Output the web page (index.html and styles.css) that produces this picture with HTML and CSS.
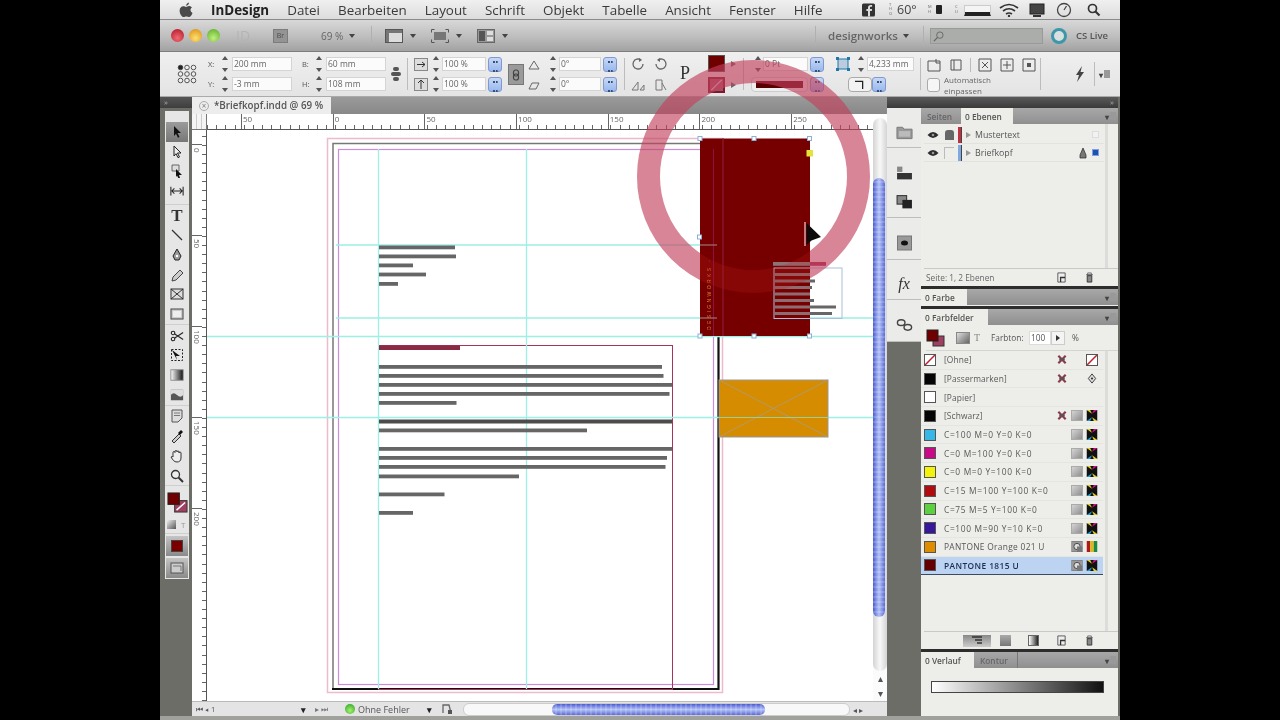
FILE: index.html
```html
<!DOCTYPE html>
<html lang="de">
<head>
<meta charset="utf-8">
<title>InDesign</title>
<link rel="stylesheet" href="styles.css">
</head>
<body>
<svg class="defs" aria-hidden="true">
  <symbol id="cross" viewBox="0 0 12 12"><path d="M2 2l8 8M10 2l-8 8" stroke="#8a3a4a" stroke-width="2.4"/><path d="M3 6h6" stroke="#555" stroke-width="2"/></symbol>
  <symbol id="cmyk" viewBox="0 0 12 12"><rect width="12" height="12" fill="#111"/><path d="M0 0l4 0 2 4z" fill="#e0d020"/><path d="M12 0l-4 0-2 4z" fill="#d01080"/><path d="M0 12l4 0 2-4z" fill="#20a0d0"/><path d="M12 12l-4 0-2-4z" fill="#e0d020"/></symbol>
  <symbol id="spot" viewBox="0 0 12 12"><rect width="12" height="12" fill="#999" stroke="#666"/><circle cx="6" cy="6" r="3.4" fill="#ddd" stroke="#444"/><path d="M6 6h6v6H6z" fill="#777"/></symbol>
  <symbol id="lab" viewBox="0 0 12 12"><rect width="4" height="12" fill="#b01818"/><rect x="4" width="4" height="12" fill="#d8b820"/><rect x="8" width="4" height="12" fill="#1c8a40"/></symbol>
  <symbol id="newdoc" viewBox="0 0 12 12"><path d="M2 1h8v10H2z" fill="#eee" stroke="#555"/><path d="M5 11V6h5" fill="none" stroke="#333" stroke-width="1.4"/></symbol>
  <symbol id="trash" viewBox="0 0 12 12"><path d="M2.5 3h7M3.5 4h5v7h-5z" fill="#888" stroke="#333"/><path d="M4 1h4v2H4z" fill="#ddd" stroke="#444" stroke-width=".7"/></symbol>
  <symbol id="eye" viewBox="0 0 12 10"><path d="M.5 5q5.500-6 11 0q-5.500 6-11 0z" fill="#2c2c2c"/><circle cx="6" cy="5" r="1.300" fill="#999"/></symbol>
</svg>

<div class="app">
  <header class="menubar">
    <svg class="apple" viewBox="0 0 14 16"><path d="M10 4c1.300 0 2.300.6 3 1.600-2.200 1.400-1.800 4.400.5 5.300-.7 1.900-2 4.100-3.500 4.100-.9 0-1.500-.6-2.600-.6s-1.800.6-2.700.6C2.700 15 .6 11.500.6 8.700.6 5.900 2.400 4.200 4.300 4.200c1.100 0 2 .7 2.800.7.700 0 1.700-.9 2.900-.9zM7.100 3.800C7 2.200 8.400.6 10 .4c.2 1.700-1.400 3.400-2.900 3.400z" fill="#4a4a4a"/></svg>
    <nav class="menus">
      <span class="menu strong">InDesign</span><span class="menu">Datei</span><span class="menu">Bearbeiten</span><span class="menu">Layout</span><span class="menu">Schrift</span><span class="menu">Objekt</span><span class="menu">Tabelle</span><span class="menu">Ansicht</span><span class="menu">Fenster</span><span class="menu">Hilfe</span>
    </nav>
    <div class="status-icons">
      <svg class="st st-fb" viewBox="0 0 13 13"><rect width="13" height="13" rx="1.500" fill="#333"/><path d="M8 13V7.500h1.800l.3-2H8V4.200c0-.6.2-1 1-1h1.100V1.400H8.700C7 1.400 6 2.400 6 4v1.500H4.400v2H6V13z" fill="#ddd"/></svg>
      <span class="mini-stack">T<br>H<br>O</span><span class="temp">60°</span>
      <span class="mini-stack wide">M<br>H</span><span class="bat-a"></span>
      <span class="mini-stack wide cu">C<br>U</span>
      <span class="slot"></span>
      <svg class="st st-wifi" viewBox="0 0 20 14"><path d="M1 5q9-7 18 0M4 8q6-4.500 12 0M7 11q3-2 6 0" fill="none" stroke="#333" stroke-width="1.700"/><circle cx="10" cy="13" r="1.200" fill="#333"/></svg>
      <svg class="st st-disp" viewBox="0 0 16 14"><rect x="1" y="1" width="14" height="10" fill="#444" stroke="#222"/><path d="M4 13h8" stroke="#333" stroke-width="2"/></svg>
      <svg class="st st-clock" viewBox="0 0 16 16"><circle cx="8" cy="8" r="6.500" fill="none" stroke="#444" stroke-width="1.300"/><path d="M8 8l2.500-4" stroke="#444" stroke-width="1.300"/></svg>
      <svg class="st st-search" viewBox="0 0 14 14"><circle cx="5.500" cy="5.500" r="4" fill="none" stroke="#333" stroke-width="1.700"/><path d="M8.500 8.500l4 4" stroke="#333" stroke-width="2.200"/></svg>
    </div>
  </header>

  <div class="appbar">
    <div class="lights"><i class="light red"></i><i class="light amber"></i><i class="light green"></i></div>
    <span class="id-ghost">ID</span>
    <span class="br">Br</span>
    <span class="zoom-val">69 %<b class="caret"></b></span>
    <i class="vsep"></i>
    <svg class="barico first" viewBox="0 0 18 14"><rect x=".5" y=".5" width="17" height="13" fill="#ddd" stroke="#555"/><rect x="1" y="1" width="16" height="3" fill="#777"/><rect x="1" y="4" width="3" height="9" fill="#777"/></svg><b class="caret"></b>
    <svg class="barico" viewBox="0 0 18 14"><rect x="3" y="3" width="12" height="8" fill="#777"/><path d="M.5 3.500v-3h3M14.500.5h3v3M.5 10.500v3h3M14.500 13.500h3v-3" fill="none" stroke="#555"/></svg><b class="caret"></b>
    <svg class="barico" viewBox="0 0 18 14"><rect x=".5" y=".5" width="17" height="13" fill="#999" stroke="#666"/><rect x="2" y="2" width="6" height="10" fill="#555"/><rect x="10" y="2" width="6" height="4" fill="#ddd"/><rect x="10" y="8" width="6" height="4" fill="#ddd"/></svg><b class="caret"></b>
    <span class="spacer"></span>
    <i class="vsep"></i>
    <span class="workspace">designworks<b class="caret"></b></span>
    <i class="vsep"></i>
    <span class="searchbox"><svg viewBox="0 0 12 12"><circle cx="7.500" cy="4.500" r="3.500" fill="none" stroke="#666"/><path d="M5 7l-4 4" stroke="#666" stroke-width="1.400"/></svg></span>
    <i class="cs-ring"></i>
    <span class="cslive">CS Live</span>
  </div>

  <div class="control">
    <svg class="refpoint" viewBox="0 0 20 20"><g fill="#eee" stroke="#444" stroke-width=".9"><circle cx="3.500" cy="3.500" r="2.300" fill="#222"/><circle cx="10" cy="3.500" r="2.300"/><circle cx="16.500" cy="3.500" r="2.300"/><circle cx="3.500" cy="10" r="2.300"/><circle cx="10" cy="10" r="2.300"/><circle cx="16.500" cy="10" r="2.300"/><circle cx="3.500" cy="16.500" r="2.300"/><circle cx="10" cy="16.500" r="2.300"/><circle cx="16.500" cy="16.500" r="2.300"/></g></svg>
    <div class="cgroup g-xy">
      <div class="crow"><span class="lbl">X:</span><i class="spin"></i><span class="field f-60">200 mm</span></div>
      <div class="crow"><span class="lbl">Y:</span><i class="spin"></i><span class="field f-60">-3 mm</span></div>
    </div>
    <div class="cgroup g-bh">
      <div class="crow"><span class="lbl">B:</span><i class="spin"></i><span class="field f-60">60 mm</span></div>
      <div class="crow"><span class="lbl">H:</span><i class="spin"></i><span class="field f-60">108 mm</span></div>
    </div>
    <svg class="chain" viewBox="0 0 12 16"><g fill="#555"><rect x="3" y="1" width="6" height="4" rx="2"/><rect x="1" y="6" width="10" height="4" rx="2"/><rect x="3" y="11" width="6" height="4" rx="2"/></g></svg>
    <i class="csep s1"></i>
    <div class="cgroup g-scale">
      <div class="crow"><svg class="tinyico" viewBox="0 0 14 13"><rect x=".5" y=".5" width="13" height="12" fill="#ddd" stroke="#888"/><path d="M3 6.500h8M11 6.500L8 4M11 6.500L8 9" stroke="#333" fill="none"/></svg><i class="spin"></i><span class="field f-44">100 %</span><i class="select"></i></div>
      <div class="crow"><svg class="tinyico" viewBox="0 0 14 13"><rect x=".5" y=".5" width="13" height="12" fill="#ddd" stroke="#888"/><path d="M7 2v9M7 2L4 5M7 2l3 3" stroke="#333" fill="none"/></svg><i class="spin"></i><span class="field f-44">100 %</span><i class="select"></i></div>
    </div>
    <span class="linkbtn"><svg viewBox="0 0 8 12"><rect x="1.500" y="1" width="5" height="6" rx="2.200" fill="none" stroke="#444" stroke-width="1.200"/><rect x="1.500" y="5" width="5" height="6" rx="2.200" fill="none" stroke="#444" stroke-width="1.200"/></svg></span>
    <div class="cgroup g-angle">
      <div class="crow"><svg class="tinyico" viewBox="0 0 14 13"><path d="M2 11h10L7 3z" fill="none" stroke="#666"/></svg><i class="spin"></i><span class="field f-42">0°</span><i class="select"></i></div>
      <div class="crow"><svg class="tinyico" viewBox="0 0 14 13"><path d="M2 11l3-6h7l-3 6z" fill="none" stroke="#666"/></svg><i class="spin"></i><span class="field f-42">0°</span><i class="select"></i></div>
    </div>
    <i class="csep s2"></i>
    <div class="rotgrid">
      <svg viewBox="0 0 16 16"><path d="M13 8a5 5 0 1 1-2-4" fill="none" stroke="#666" stroke-width="1.300"/><path d="M9 2l3 2-3 2" fill="#666"/></svg>
      <svg viewBox="0 0 16 16"><path d="M3 8a5 5 0 1 0 2-4" fill="none" stroke="#666" stroke-width="1.300"/><path d="M7 2L4 4l3 2" fill="#666"/></svg>
      <svg viewBox="0 0 16 16"><path d="M2 13h6V5l-6 8zM14 13V8l-4 5z" fill="none" stroke="#777"/></svg>
      <svg viewBox="0 0 16 16"><path d="M3 3h6v10H3zM9 6l4 7" fill="none" stroke="#777"/></svg>
    </div>
    <span class="pbox">P</span>
    <div class="fillstack">
      <div class="crow"><i class="fillchip"></i><i class="miniarrow"></i></div>
      <div class="crow"><span class="strokechip"><svg viewBox="0 0 14 14"><path d="M1 13L13 1" stroke="#e0e0e0" stroke-width="1.300"/></svg></span><i class="miniarrow"></i></div>
    </div>
    <i class="csep s3"></i>
    <div class="cgroup g-stroke">
      <div class="crow"><i class="spin"></i><span class="field f-stroke">0 Pt</span><i class="select"></i></div>
      <div class="crow"><span class="strokeline"><i></i></span><i class="select"></i></div>
    </div>
    <div class="cgroup g-corner">
      <div class="crow"><svg class="tinyico blueico" viewBox="0 0 14 14"><path d="M2 2h10v10H2z" fill="#bcd" stroke="#27a"/><path d="M0 0h3v3H0zM11 0h3v3h-3zM0 11h3v3H0zM11 11h3v3h-3z" fill="#27a"/></svg><i class="spin"></i><span class="field f-corner">4,233 mm</span></div>
      <div class="crow corner-row"><span class="cornersel"><svg viewBox="0 0 12 10"><path d="M1 1.500h8.500V10" fill="none" stroke="#222" stroke-width="1.400"/></svg></span><i class="select"></i></div>
    </div>
    <i class="csep s5"></i>
    <div class="fitting">
      <div class="fit-icons">
        <svg viewBox="0 0 14 14"><path d="M1 3h12v10H1z" fill="none" stroke="#555"/><path d="M9 1v4h4" fill="none" stroke="#555"/></svg>
        <svg viewBox="0 0 14 14"><path d="M2 2h10v10H2z" fill="none" stroke="#555"/><path d="M5 2v10" stroke="#555"/></svg>
        <i class="fit-sep"></i>
        <svg viewBox="0 0 14 14"><path d="M1 1h12v12H1z" fill="none" stroke="#555"/><path d="M4 4l6 6M10 4l-6 6" stroke="#555"/></svg>
        <svg viewBox="0 0 14 14"><path d="M1 1h12v12H1z" fill="none" stroke="#555"/><path d="M7 3v8M3 7h8" stroke="#555"/></svg>
        <svg viewBox="0 0 14 14"><path d="M1 1h12v12H1z" fill="none" stroke="#555"/><rect x="5" y="5" width="4" height="4" fill="#555"/></svg>
      </div>
      <div class="autofit"><i class="checkbox"></i><span>Automatisch<br>einpassen</span></div>
    </div>
    <i class="csep s6"></i>
    <svg class="bolt" viewBox="0 0 10 16"><path d="M7 0L1 9h3l-2 7 7-10H5.500z" fill="#444"/></svg>
    <i class="csep s7"></i>
    <span class="panelmenu"><b>▾</b><i></i></span>
  </div>

  <div class="work">
    <aside class="toolcol">
      <div class="coltop"><span>»</span></div>
      <div class="tools">
        <div class="toolset first-set">
          <span class="tool active"><svg viewBox="0 0 14 14"><path d="M4 1l7 7H7.500l2 4-1.500.7-2-4L4 11z" fill="#111"/></svg></span>
          <span class="tool"><svg viewBox="0 0 14 14"><path d="M4 1l7 7H7.500l2 4-1.500.7-2-4L4 11z" fill="#eee" stroke="#222"/></svg></span>
          <span class="tool"><svg viewBox="0 0 14 14"><path d="M2 1h7v6H2z" fill="#ddd" stroke="#666"/><path d="M6 5l6 6H9l1 3-1.500.3L7 11.500 6 13z" fill="#111"/></svg></span>
          <span class="tool"><svg viewBox="0 0 16 14"><path d="M1 2v10M15 2v10M2 7h12M2 7l3-3M2 7l3 3M14 7l-3-3M14 7l-3 3" fill="none" stroke="#222" stroke-width="1.200"/></svg></span>
        </div>
        <div class="toolset">
          <span class="tool"><span class="t-glyph">T</span></span>
          <span class="tool"><svg viewBox="0 0 14 14"><path d="M2 2l10 10" stroke="#333" stroke-width="1.300"/></svg></span>
          <span class="tool"><svg viewBox="0 0 14 14"><path d="M7 1l4 7-2 4H5L3 8z" fill="#999" stroke="#222"/><circle cx="7" cy="8" r="1.200" fill="#fff"/></svg></span>
          <span class="tool"><svg viewBox="0 0 14 14"><path d="M2 13l1-4 7-7 3 3-7 7z" fill="#ccc" stroke="#444"/></svg></span>
          <span class="tool"><svg viewBox="0 0 14 14"><rect x="1" y="2" width="12" height="10" fill="#ddd" stroke="#333"/><path d="M1 2l12 10M13 2L1 12" stroke="#333"/></svg></span>
          <span class="tool"><svg viewBox="0 0 14 14"><rect x="1" y="2" width="12" height="10" fill="#ccc" stroke="#444"/><rect x="3" y="4" width="8" height="6" fill="#eee"/></svg></span>
        </div>
        <div class="toolset">
          <span class="tool"><svg viewBox="0 0 16 14"><circle cx="3.500" cy="3.500" r="2" fill="none" stroke="#222" stroke-width="1.200"/><circle cx="3.500" cy="10.500" r="2" fill="none" stroke="#222" stroke-width="1.200"/><path d="M5 4.500L15 11M5 9.500L15 3" stroke="#222" stroke-width="1.200"/></svg></span>
          <span class="tool"><svg viewBox="0 0 14 14"><rect x="1.500" y="1.500" width="11" height="11" fill="none" stroke="#222" stroke-dasharray="2 1.500"/><path d="M2 2l8 6H6l1 4z" fill="#111"/></svg></span>
          <span class="tool"><svg viewBox="0 0 16 14"><defs><linearGradient id="gt"><stop offset="0" stop-color="#fff"/><stop offset="1" stop-color="#111"/></linearGradient></defs><rect x="1" y="1" width="14" height="12" fill="url(#gt)" stroke="#888"/></svg></span>
          <span class="tool"><svg viewBox="0 0 16 14"><rect x="1" y="1" width="14" height="12" fill="#555"/><path d="M1 7q3-4 7 0t7 0V1H1z" fill="#ddd"/></svg></span>
        </div>
        <div class="toolset">
          <span class="tool"><svg viewBox="0 0 14 14"><path d="M2 1h10v8l-4 4H2z" fill="#ddd" stroke="#555"/><path d="M4 4h6M4 6.500h6" stroke="#777"/></svg></span>
          <span class="tool"><svg viewBox="0 0 14 14"><path d="M2 12l7-7 2 2-7 7z" fill="#ccc" stroke="#333"/><path d="M8 4l3-3 2 2-3 3z" fill="#111"/></svg></span>
          <span class="tool"><svg viewBox="0 0 14 14"><path d="M3 7V3.500a1 1 0 0 1 2 0V2.500a1 1 0 0 1 2 0v.5a1 1 0 0 1 2 0v1a1 1 0 0 1 2 0V9c0 3-2 4-4 4-3 0-4-2-6-5 1-1 2 0 2 0z" fill="#eee" stroke="#333"/></svg></span>
          <span class="tool"><svg viewBox="0 0 14 14"><circle cx="5.500" cy="5.500" r="4" fill="#eee" stroke="#333" stroke-width="1.300"/><path d="M8.500 8.500l4.500 4.500" stroke="#333" stroke-width="2"/></svg></span>
        </div>
        <div class="toolset colors">
          <svg class="fs" viewBox="0 0 22 22"><rect x="8" y="9" width="13" height="12" fill="#a04060" stroke="#333"/><path d="M10 19l9-8" stroke="#fff" stroke-width="1.500"/><rect x="1" y="1" width="12" height="12" fill="#6e0000" stroke="#222"/></svg>
          <div class="fs-mini"><i class="fm-a"></i><i class="fm-t">T</i></div>
        </div>
        <div class="toolset viewbtns">
          <span class="tool big"><i class="viewchip"></i></span>
          <span class="tool big"><svg viewBox="0 0 14 12"><rect x="1" y="1" width="12" height="10" fill="#ccc" stroke="#555"/><path d="M3 4h8v5" fill="none" stroke="#777"/></svg></span>
        </div>
      </div>
    </aside>

    <section class="doc">
      <div class="doctabs"><span class="doctab"><i class="close">×</i>*Briefkopf.indd @ 69 %</span></div>
      <div class="hruler"><span class="corner"></span><div class="hmarks"><span>50</span><span>0</span><span>50</span><span>100</span><span>150</span><span>200</span><span>250</span></div><i class="ruler-cap"></i></div>
      <div class="docmid">
        <div class="vruler"><span>0</span><span>50</span><span>100</span><span>150</span><span>200</span></div>
        <svg class="canvas" viewBox="207 130 666 571">
          <rect x="207" y="130" width="666" height="571" fill="#fff"/>
          <g fill="none">
            <rect x="327.500" y="138.500" width="395" height="554" stroke="#ecbccc" stroke-width="1.500"/>
            <path d="M333 689V143.500H718" stroke="#777" stroke-width="1.500"/>
            <path d="M718.500 143V689H332" stroke="#111" stroke-width="2.200"/>
            <rect x="338.500" y="149.500" width="375" height="535" stroke="#cc8cdc" stroke-width="1.200"/>
            <rect x="378.500" y="345.500" width="294" height="344" stroke="#a8325a"/>
          </g>
          <g stroke="#9cf0e4" stroke-width="1.300">
            <path d="M378.500 149V689M526.500 149V689"/>
            <path d="M336 245H717M336 318H873M207 336.500H873M207 417.500H873"/>
          </g>
          <g class="greek">
            <rect x="379" y="245.500" width="76" height="3.800"/><rect x="379" y="254.500" width="77" height="3.800"/><rect x="379" y="263.500" width="34" height="3.800"/><rect x="379" y="272.600" width="47" height="3.800"/><rect x="379" y="282" width="19" height="3.800"/>
            <rect class="greek-red" x="379" y="345.500" width="81" height="4.500"/>
            <rect x="379" y="365" width="283" height="3.800"/><rect x="379" y="374" width="284.500" height="3.800"/><rect x="379" y="383" width="293" height="3.800"/><rect x="379" y="392" width="290.500" height="3.800"/><rect x="379" y="401" width="77.500" height="3.800"/>
            <rect class="greek-dark" x="379" y="419.500" width="293" height="4"/><rect x="379" y="428.500" width="208" height="3.800"/>
            <rect x="379" y="447" width="293" height="3.800"/><rect x="379" y="456" width="288" height="3.800"/><rect x="379" y="465" width="286.500" height="3.800"/><rect x="379" y="474.500" width="140" height="3.800"/>
            <rect x="379" y="492.500" width="65.500" height="3.800"/><rect x="379" y="511" width="34" height="3.800"/>
          </g>
          <rect x="719" y="380" width="109" height="57" fill="#d68c00" stroke="#999"/>
          <path d="M719 380l109 57M828 380l-109 57" stroke="#b09a6a"/>
          <path d="M719 417.500H828" stroke="#9ccf90" stroke-width="1.200"/>
          <rect x="700" y="138.500" width="110" height="197.500" rx="2" fill="#760000"/>
          <path d="M713.500 149V336" stroke="#8e1048"/>
          <path d="M723 138V336" stroke="#8e2040"/>
          <path d="M700 245H717M700 318H717" stroke="#a08a88"/>
          <rect x="774" y="268" width="68" height="50.500" fill="none" stroke="#a8c0e0"/>
          <rect x="773" y="262" width="37" height="3.800" fill="#8d7276"/><rect x="810" y="262" width="16" height="3.800" fill="#a02a50"/>
          <g class="greek-on">
            <rect x="774" y="273" width="36" height="3"/><rect x="774" y="279.500" width="36" height="3"/><rect x="774" y="286" width="36" height="3"/><rect x="774" y="292.500" width="36" height="3"/><rect x="774" y="299" width="36" height="3"/><rect x="774" y="305.500" width="36" height="3"/><rect x="774" y="312" width="36" height="3"/>
          </g>
          <g fill="#666">
            <rect x="810" y="279.500" width="5" height="3"/><rect x="810" y="286" width="2" height="3"/><rect x="810" y="299" width="4" height="3"/><rect x="810" y="305.500" width="26" height="3"/><rect x="810" y="312" width="22" height="3"/>
          </g>
          <text class="spine" transform="translate(711 330) rotate(-90)">DESIGNWORKS ·</text>
          <g class="handles">
            <rect x="698" y="136.500" width="4" height="4"/><rect x="752" y="136.500" width="4" height="4"/><rect x="807.500" y="136.500" width="4" height="4"/><rect x="697.500" y="235" width="4" height="4"/><rect x="698" y="334" width="4" height="4"/><rect x="752" y="334" width="4" height="4"/><rect x="807.500" y="334" width="4" height="4"/>
          </g>
          <rect x="806.500" y="150" width="6.500" height="6.500" fill="#e6e23c"/>
        </svg>
        <div class="vscroll">
          <div class="v-track"><i class="v-thumb"></i></div>
          <i class="arr a1">▴</i><i class="arr">▾</i>
        </div>
      </div>
      <div class="docstatus">
        <span class="pg-nav">⏮ ◂ 1</span>
        <b class="sm-caret">▾</b>
        <span class="pg-nav2">▸ ⏭</span>
        <i class="okdot"></i><span class="oktext">Ohne Fehler</span>
        <b class="sm-caret c2">▾</b>
        <svg class="preflight" viewBox="0 0 12 12"><path d="M2 10V2h6l2 8" fill="none" stroke="#666" stroke-width="1.300"/><rect x="7" y="7" width="4" height="4" fill="#555"/></svg>
        <div class="hscroll"><i class="h-thumb"></i></div>
        <span class="harr">◂ ▸</span>
      </div>
    </section>

    <aside class="dock">
      <div class="coltop dark"></div>
      <div class="docksec s-a"><svg viewBox="0 0 18 16"><path d="M1 3h6l1.500 2H17v10H1z" fill="#999" stroke="#777"/><rect x="3" y="7" width="12" height="6" fill="#bbb"/></svg></div>
      <div class="docksec s-b"><svg viewBox="0 0 16 14"><rect x="1" y="1" width="5" height="5" fill="#888"/><rect x="1" y="7" width="14" height="6" fill="#333"/></svg><svg viewBox="0 0 16 14"><rect x="1" y="1" width="9" height="8" fill="#888" stroke="#333"/><rect x="6" y="5" width="9" height="8" fill="#222"/></svg></div>
      <div class="docksec s-c"><svg viewBox="0 0 16 16"><rect x="1" y="1" width="14" height="14" fill="#999" stroke="#777"/><ellipse cx="8" cy="8" rx="3.500" ry="2.500" fill="#111"/></svg></div>
      <div class="docksec s-d"><span class="fx">fx</span></div>
      <div class="docksec s-e"><svg viewBox="0 0 18 14"><ellipse cx="5.500" cy="4.500" rx="4" ry="3" fill="none" stroke="#444" stroke-width="1.500"/><ellipse cx="12.500" cy="9.500" rx="4" ry="3" fill="none" stroke="#444" stroke-width="1.500"/></svg></div>
    </aside>

    <aside class="panels">
      <div class="coltop dark right"><span>»</span></div>
      <section class="panel p-layers">
        <div class="ptabs"><span class="ptab off">Seiten</span><span class="ptab on">0 Ebenen</span><span class="pmenu"><b>▾</b><i></i></span></div>
        <div class="pbody layers">
          <div class="layer"><svg class="eye" viewBox="0 0 12 10"><use href="#eye"/></svg><i class="lock"></i><i class="lcolor lred"></i><b class="tri"></b><span class="lname">Mustertext</span><i class="lsq"></i></div>
          <div class="layer"><svg class="eye" viewBox="0 0 12 10"><use href="#eye"/></svg><i class="nolock"></i><i class="lcolor lblue"></i><b class="tri"></b><span class="lname">Briefkopf</span><svg class="pen" viewBox="0 0 8 12"><path d="M4 1l3 7v3H1V8z" fill="#777" stroke="#222" stroke-width=".7"/></svg><i class="lsq bl"></i></div>
        </div>
        <div class="pfoot"><span class="pagesinfo">Seite: 1, 2 Ebenen</span><svg viewBox="0 0 12 12"><use href="#newdoc"/></svg><svg viewBox="0 0 12 12"><use href="#trash"/></svg></div>
      </section>
      <section class="panel p-color">
        <div class="ptabs"><span class="ptab on">0 Farbe</span><span class="pmenu"><b>▾</b><i></i></span></div>
      </section>
      <section class="panel p-swatches">
        <div class="ptabs"><span class="ptab on">0 Farbfelder</span><span class="pmenu"><b>▾</b><i></i></span></div>
        <div class="tintbar">
          <svg class="fs2" viewBox="0 0 20 18"><rect x="7" y="7" width="11" height="10" fill="#a04060" stroke="#333"/><rect x="1" y="1" width="11" height="11" fill="#6e0000" stroke="#222"/></svg>
          <span class="fmtbox"></span><span class="ttxt">T</span><span class="tintlabel">Farbton:</span><span class="tintval">100</span><span class="tintarrow"><b></b></span><span class="pct">%</span>
        </div>
        <div class="swlist">
          <div class="sw"><span class="chip none"><svg viewBox="0 0 12 12"><path d="M0 12L12 0" stroke="#c0202c" stroke-width="1.800"/></svg></span><span class="swname tight">[Ohne]</span><svg class="mi" viewBox="0 0 12 12"><use href="#cross"/></svg><span class="mi blank"></span><span class="chip small none"><svg viewBox="0 0 12 12"><path d="M0 12L12 0" stroke="#c0202c" stroke-width="1.800"/></svg></span></div>
          <div class="sw"><span class="chip k"></span><span class="swname tight">[Passermarken]</span><svg class="mi" viewBox="0 0 12 12"><use href="#cross"/></svg><span class="mi blank"></span><svg class="mi" viewBox="0 0 12 12"><path d="M6 1l4 5-4 5-4-5z" fill="#ddd" stroke="#333"/><circle cx="6" cy="6" r="1.200" fill="#333"/></svg></div>
          <div class="sw"><span class="chip w"></span><span class="swname tight">[Papier]</span></div>
          <div class="sw"><span class="chip k"></span><span class="swname tight">[Schwarz]</span><svg class="mi" viewBox="0 0 12 12"><use href="#cross"/></svg><i class="mi gray"></i><svg class="mi" viewBox="0 0 12 12"><use href="#cmyk"/></svg></div>
          <div class="sw"><span class="chip cy"></span><span class="swname">C=100 M=0 Y=0 K=0</span><span class="mi blank"></span><i class="mi gray"></i><svg class="mi" viewBox="0 0 12 12"><use href="#cmyk"/></svg></div>
          <div class="sw"><span class="chip ma"></span><span class="swname">C=0 M=100 Y=0 K=0</span><span class="mi blank"></span><i class="mi gray"></i><svg class="mi" viewBox="0 0 12 12"><use href="#cmyk"/></svg></div>
          <div class="sw"><span class="chip ye"></span><span class="swname">C=0 M=0 Y=100 K=0</span><span class="mi blank"></span><i class="mi gray"></i><svg class="mi" viewBox="0 0 12 12"><use href="#cmyk"/></svg></div>
          <div class="sw"><span class="chip re"></span><span class="swname">C=15 M=100 Y=100 K=0</span><span class="mi blank"></span><i class="mi gray"></i><svg class="mi" viewBox="0 0 12 12"><use href="#cmyk"/></svg></div>
          <div class="sw"><span class="chip gr"></span><span class="swname">C=75 M=5 Y=100 K=0</span><span class="mi blank"></span><i class="mi gray"></i><svg class="mi" viewBox="0 0 12 12"><use href="#cmyk"/></svg></div>
          <div class="sw"><span class="chip in"></span><span class="swname">C=100 M=90 Y=10 K=0</span><span class="mi blank"></span><i class="mi gray"></i><svg class="mi" viewBox="0 0 12 12"><use href="#cmyk"/></svg></div>
          <div class="sw spot-row"><span class="chip or"></span><span class="swname">PANTONE Orange 021 U</span><span class="mi blank"></span><svg class="mi" viewBox="0 0 12 12"><use href="#spot"/></svg><svg class="mi" viewBox="0 0 12 12"><use href="#lab"/></svg></div>
          <div class="sw selected"><span class="chip da"></span><span class="swname">PANTONE 1815 U</span><span class="mi blank"></span><svg class="mi" viewBox="0 0 12 12"><use href="#spot"/></svg><svg class="mi" viewBox="0 0 12 12"><use href="#cmyk"/></svg></div>
        </div>
        <div class="pfoot swfoot">
          <span class="showbtn"><svg viewBox="0 0 12 10"><path d="M1 2h10M4 5h7M6 8h5" stroke="#333" stroke-width="1.400"/></svg></span>
          <i class="fb solid"></i><i class="fb grad"></i>
          <svg viewBox="0 0 12 12"><use href="#newdoc"/></svg><svg viewBox="0 0 12 12"><use href="#trash"/></svg>
        </div>
      </section>
      <section class="panel p-grad">
        <div class="ptabs"><span class="ptab on">0 Verlauf</span><span class="ptab off">Kontur</span><i class="tabdiv"></i><span class="pmenu"><b>▾</b><i></i></span></div>
        <div class="gradbody"><i class="gradbar"></i></div>
      </section>
    </aside>
  </div>
  <div class="footer"></div>

  <svg class="overlay" viewBox="160 0 960 720" aria-hidden="true">
    <defs>
      <clipPath id="inrect"><rect x="700" y="138" width="110" height="198"/></clipPath>
      <mask id="outrect" maskUnits="userSpaceOnUse" x="160" y="0" width="960" height="720"><rect x="160" y="0" width="960" height="720" fill="#fff"/><rect x="700" y="138" width="110" height="198" fill="#000"/></mask>
    </defs>
    <circle cx="753.500" cy="176.500" r="105" fill="none" stroke="#c0405c" stroke-opacity=".64" stroke-width="23" mask="url(#outrect)"/>
    <circle cx="753.500" cy="176.500" r="105" fill="none" stroke="#c41a1a" stroke-opacity=".22" stroke-width="23" clip-path="url(#inrect)"/>
    <path d="M805 222v24" stroke="#e0a0a8" stroke-width="1.500"/>
    <path d="M806.500 223v22l5-4.500 9.500-3.500z" fill="#0b0b0b"/>
  </svg>
</div>
</body>
</html>
```
FILE: styles.css
```css
* { box-sizing: border-box; }
html, body { margin: 0; height: 100%; background: #000; overflow: hidden; }
.defs { position: absolute; width: 0; height: 0; }
i, b { display: block; font-style: normal; }
svg { display: block; flex: none; }

.app {
  position: relative; width: 960px; height: 720px; margin-left: 160px;
  display: flex; flex-direction: column; overflow: hidden;
  background: #6d6d68; color: #444;
  font-family: "Open Sans", "Liberation Sans", sans-serif;
  filter: blur(.55px);
}
.overlay { position: absolute; left: 0; top: 0; width: 960px; height: 720px; pointer-events: none; }

/* menu bar */
.menubar { height: 20px; flex: none; display: flex; align-items: center; background: linear-gradient(#f0f0f0, #dcdcdc); border-bottom: 1px solid #8a8a8a; }
.apple { width: 14px; height: 16px; margin-left: 19px; }
.menus { display: flex; gap: 18px; margin-left: 18px; font-size: 13.400px; color: #3a3a3a; white-space: nowrap; }
.menu { display: block; }
.strong { font-weight: 700; color: #222; }
.status-icons { margin-left: auto; display: flex; align-items: center; }
.st { height: 14px; }
.st-fb { width: 13px; margin-right: 14px; }
.mini-stack { font-size: 4px; line-height: 4.300px; color: #666; width: 6px; }
.mini-stack.wide { margin-left: 7px; }
.mini-stack.cu { margin-left: 13px; }
.temp { font-size: 12.500px; color: #444; margin-left: 2px; width: 24px; }
.bat-a { width: 6px; height: 9px; margin-left: 2px; background: #222; border-radius: 1px; }
.slot { width: 27px; height: 11px; margin-left: 3px; margin-top: 2px; background: linear-gradient(#f4f4f4 70%, #222 70%); border: 1px solid #ccc; border-bottom: 2px solid #222; }
.st-wifi { width: 20px; margin-left: 8px; }
.st-disp { width: 16px; margin-left: 10px; }
.st-clock { width: 16px; height: 16px; margin-left: 11px; }
.st-search { width: 14px; margin: 0 19px 0 15px; }

/* app bar */
.appbar { height: 32px; flex: none; display: flex; align-items: center; background: linear-gradient(#d8d8d8, #bdbdbd 55%, #a2a2a2); border-bottom: 1px solid #7d7d7d; }
.lights { display: flex; gap: 5px; margin-left: 11px; }
.light { width: 13px; height: 13px; border-radius: 50%; }
.red { background: radial-gradient(circle at 50% 70%, #f06a72, #b01024); }
.amber { background: radial-gradient(circle at 50% 70%, #ffe070, #d88a10); }
.green { background: radial-gradient(circle at 50% 70%, #c0f080, #58a820); }
.id-ghost { font-size: 14px; color: #b4b4b4; margin-left: 16px; width: 22px; }
.br { width: 15px; height: 14px; margin-left: 15px; background: #949494; border: 1px solid #7c7c7c; font-size: 7px; line-height: 12px; text-align: center; color: #4c4c4c; }
.zoom-val { display: flex; align-items: center; width: 50px; margin-left: 33px; font-size: 10px; color: #666; gap: 6px; white-space: nowrap; }
.caret { width: 0; height: 0; border: 3px solid transparent; border-top: 4px solid #444; border-bottom: 0; flex: none; }
.vsep { width: 1px; height: 20px; background: #b0b0b0; flex: none; }
.barico { width: 18px; height: 14px; margin-left: 15px; margin-right: 7px; }
.barico.first { margin-left: 13px; }
.spacer { flex: 1; }
.workspace { display: flex; align-items: center; gap: 5px; margin: 0 14px 0 12px; font-size: 11.500px; font-weight: 600; color: #666; }
.searchbox { width: 113px; height: 16px; margin-left: 6px; background: #aaadaa; border: 1px solid #989a98; padding: 2px; }
.searchbox svg { width: 11px; height: 11px; }
.cs-ring { width: 16px; height: 16px; margin-left: 8px; border-radius: 50%; border: 3.500px solid #3e97a8; background: #d8e0e0; flex: none; }
.cslive { font-size: 9.500px; font-weight: 600; color: #555; margin: 0 12px 0 9px; white-space: nowrap; }

/* control panel */
.control { height: 45px; flex: none; display: flex; align-items: center; background: linear-gradient(#efefef, #e4e4e4); border-bottom: 1px solid #aaa; }
.refpoint { width: 20px; height: 20px; margin-left: 17px; }
.cgroup { display: flex; flex-direction: column; gap: 6px; flex: none; }
.crow { display: flex; align-items: center; height: 14px; }
.lbl { width: 13px; font-size: 7.500px; color: #555; flex: none; }
.g-xy { margin-left: 11px; }
.g-bh { margin-left: 10px; }
.lbl + .spin { margin-right: 2px; }
.spin { position: relative; width: 9px; height: 14px; flex: none; }
.spin::before, .spin::after { content: ""; position: absolute; left: 1px; width: 0; height: 0; border: 3.500px solid transparent; }
.spin::before { top: -1px; border-bottom: 4px solid #555; border-top: 0; }
.spin::after { bottom: -1px; border-top: 4px solid #555; border-bottom: 0; }
.field { display: block; height: 14px; background: #fbfbfb; border: 1px solid #d4d4d4; font-size: 8.500px; line-height: 12px; color: #666; padding-left: 1px; white-space: nowrap; flex: none; }
.f-60 { width: 60px; }
.f-44 { width: 44px; margin-left: 1px; }
.f-42 { width: 42px; margin-left: 1px; }
.select { width: 14px; height: 15px; margin-left: 2px; background: linear-gradient(#c8d8f4, #98b8ee); border: 1px solid #8098d0; border-radius: 3px; position: relative; flex: none; }
.select::before { content: ""; position: absolute; left: 3.500px; top: 3px; width: 5px; height: 7px; border-top: 2px dotted #33507a; border-bottom: 2px dotted #33507a; }
.chain { width: 12px; height: 16px; margin-left: 4px; }
.csep { width: 1px; height: 32px; background: #bcbcbc; flex: none; }
.s1 { margin-left: 5px; }
.tinyico { width: 14px; height: 13px; flex: none; margin-right: 4px; }
.g-scale { margin-left: 6px; }
.linkbtn { width: 16px; height: 21px; margin-left: 6px; background: #9a9a9a; border: 1px solid #777; padding: 4px 3px; flex: none; }
.linkbtn svg { width: 8px; height: 12px; }
.g-angle { margin-left: 3px; }
.g-angle .tinyico { margin-right: 8px; }
.s2 { margin-left: 7px; }
.rotgrid { display: grid; grid-template-columns: 16px 16px; column-gap: 7px; row-gap: 5px; margin-left: 5px; flex: none; }
.rotgrid svg { width: 16px; height: 16px; }
.pbox { width: 24px; height: 32px; margin-left: 4px; font-family: "Liberation Serif", serif; font-size: 18px; line-height: 30px; text-align: center; color: #333; flex: none; }
.fillstack { display: flex; flex-direction: column; gap: 5px; margin-left: 11px; flex: none; }
.fillstack .crow { height: 16px; }
.fillchip { width: 17px; height: 17px; background: #6e0000; border: 1px solid #555; }
.strokechip { width: 17px; height: 16px; background: #a8506a; border: 2px solid #7a1a2a; display: block; }
.strokechip svg { width: 13px; height: 12px; }
.miniarrow { width: 0; height: 0; margin-left: 6px; border: 3.500px solid transparent; border-left: 5px solid #666; border-right: 0; }
.s3 { margin-left: 7px; }
.g-stroke { margin-left: 10px; }
.f-stroke { width: 45px; }
.strokeline { width: 57px; height: 15px; margin-left: -3px; background: #eee; border: 1px solid #ccc; border-radius: 4px; padding: 3px 4px; display: block; flex: none; }
.strokeline i { height: 7px; background: #5a0000; }
.g-corner { margin-left: 12px; }
.f-corner { width: 47px; margin-left: 1px; }
.blueico { width: 14px; height: 14px; margin-right: 7px; }
.corner-row { padding-left: 12px; }
.corner-row .select { margin-left: 0; }
.cornersel { width: 24px; height: 15px; background: #f2f2f2; border: 1px solid #aaa; border-radius: 4px; padding: 2px 5px; flex: none; }
.cornersel svg { width: 11px; height: 9px; }
.s5 { margin-left: 6px; }
.fitting { margin-left: 6px; width: 113px; padding-top: 5px; flex: none; }
.fit-icons { display: flex; align-items: center; gap: 8px; }
.fit-icons svg { width: 14px; height: 14px; }
.fit-sep { width: 1px; height: 14px; background: #bbb; margin: 0 -1px; }
.autofit { display: flex; align-items: center; gap: 4px; margin-top: 2px; font-size: 8px; line-height: 11px; color: #666; white-space: nowrap; }
.checkbox { width: 13px; height: 14px; background: #f6f6f6; border: 1px solid #aaa; border-radius: 3px; flex: none; }
.s6 { margin-left: 0; }
.bolt { width: 10px; height: 16px; margin-left: 34px; }
.s7 { margin-left: 9px; height: 24px; }
.panelmenu, .pmenu { display: flex; align-items: center; gap: 1px; margin-left: 4px; color: #444; font-size: 8px; }
.panelmenu i, .pmenu i { width: 6px; height: 8px; background: #999; }

/* work area */
.work { height: 619px; flex: none; display: flex; background: #6d6d68; }
.coltop { height: 11px; background: linear-gradient(#555, #3e3e3e); font-size: 8px; line-height: 10px; color: #aaa; padding-left: 4px; }
.coltop.right { text-align: right; padding-right: 4px; }
.toolcol { width: 32px; flex: none; display: flex; flex-direction: column; background: #6d6d68; }
.tools { width: 24px; margin: 3px 0 0 5px; display: flex; flex-direction: column; gap: 1px; background: #e6e6e6; padding: 11px 0 0; }
.toolset { display: flex; flex-direction: column; border-bottom: 1px solid #cfcfcf; }
.first-set { padding-bottom: 3px; }
.tool { height: 19.700px; display: flex; align-items: center; justify-content: center; }
.tool svg { width: 14px; height: 14px; }
.tool.active { background: linear-gradient(#9b9b9b, #777); margin: 0 1px; }
.tool.big { background: linear-gradient(#c4c4c4, #8a8a8a); margin: 1px; height: 20px; }
.t-glyph { font-family: "Liberation Serif", serif; font-size: 17px; font-weight: 700; color: #333; }
.colors { padding: 5px 0 2px 2px; }
.fs { width: 21px; height: 21px; }
.fs-mini { display: flex; gap: 5px; margin-top: 7px; height: 11px; }
.fm-a { width: 9px; height: 9px; background: linear-gradient(135deg, #eee, #555); }
.fm-t { font-size: 8px; line-height: 9px; color: #999; }
.viewchip { width: 12px; height: 12px; background: #7a0000; border: 1px solid #444; }
.viewbtns { border: 0; }

.doc { width: 695px; flex: none; display: flex; flex-direction: column; }
.doctabs { height: 17px; flex: none; background: linear-gradient(#9a9a9a, #888); }
.doctab { display: flex; align-items: center; width: 139px; height: 17px; background: #ededed; font-size: 9.800px; font-weight: 600; color: #555; padding-left: 7px; white-space: nowrap; }
.close { width: 10px; height: 10px; margin-right: 5px; border: 1px solid #aaa; border-radius: 50%; font-size: 8px; line-height: 8px; text-align: center; color: #888; flex: none; }
.hruler { height: 16px; flex: none; display: flex; background: #fff; }
.corner { width: 15px; flex: none; border-right: 1px solid #777; border-bottom: 1px solid #777; background: repeating-linear-gradient(90deg, transparent 0 4px, #ccc 4px 5px), #f4f4f4; }
.hmarks { flex: 1; display: flex; padding-left: 34px; overflow: hidden; border-bottom: 1px solid #555; background: repeating-linear-gradient(90deg, #666 0 1px, transparent 1px 9.170px) 0 100% / 100% 4px no-repeat, #fff; }
.hmarks span { width: 91.700px; flex: none; border-left: 1px solid #666; font-size: 8px; line-height: 10px; color: #666; padding-left: 1px; }
.ruler-cap { width: 14px; flex: none; margin-top: 4px; border-radius: 7px 7px 0 0; background: linear-gradient(90deg, #d4d4d4, #f8f8f8 50%, #d4d4d4); }
.docmid { height: 571px; flex: none; display: flex; }
.vruler { width: 15px; flex: none; padding-top: 14px; border-right: 1px solid #555; overflow: hidden; background: repeating-linear-gradient(0deg, #666 0 1px, transparent 1px 9.100px) 100% 0 / 4px 100% no-repeat, #fff; }
.vruler span { display: block; height: 91px; border-top: 1px solid #666; font-size: 8px; line-height: 10px; color: #666; writing-mode: vertical-rl; padding-top: 3px; }
.canvas { width: 666px; height: 571px; }
.greek rect { fill: #666; }
.greek .greek-red { fill: #8a2a45; }
.greek .greek-dark { fill: #4c4c4c; }
.greek-on rect { fill: #8d6c72; }
.handles rect { fill: #fff; stroke: #8ab0d8; stroke-width: 1; }
.spine { font-family: "Liberation Sans", sans-serif; font-size: 5px; letter-spacing: 2.400px; fill: #d88a30; }
.vscroll { width: 14px; flex: none; display: flex; flex-direction: column; align-items: center; background: #fbfbfb; }
.v-track { height: 541px; width: 14px; flex: none; padding-top: 48px; border-radius: 0 0 7px 7px; background: linear-gradient(90deg, #d4d4d4, #f8f8f8 50%, #d4d4d4); }
.v-thumb { width: 12px; height: 439px; border-radius: 6px; background: repeating-linear-gradient(180deg, transparent 0 3px, rgba(255,255,255,.16) 3px 5px), linear-gradient(90deg, #4a5ad0, #b4c2f6 50%, #5a6ad8); }
.arr { font-size: 10px; line-height: 15px; color: #555; }
.a1 { margin-top: 0; }
.docstatus { height: 15px; flex: none; display: flex; align-items: center; background: #e4e4e4; border-top: 1px solid #bbb; font-size: 7.500px; color: #555; }
.pg-nav { width: 109px; padding-left: 4px; white-space: nowrap; flex: none; }
.sm-caret { font-size: 9px; width: 14px; color: #222; flex: none; }
.pg-nav2 { width: 27px; color: #777; white-space: nowrap; flex: none; }
.okdot { width: 10px; height: 10px; border-radius: 50%; background: radial-gradient(circle at 50% 65%, #a8f070, #20a020); flex: none; margin-right: 3px; margin-left: 3px; }
.oktext { font-size: 9px; width: 69px; white-space: nowrap; flex: none; }
.c2 { width: 12px; }
.preflight { width: 12px; height: 12px; margin-left: 2px; margin-right: 6px; }
.hscroll { flex: 1; height: 13px; margin-left: 4px; background: #f8f8f8; border-radius: 6px; border: 1px solid #ccc; padding-left: 88px; min-width: 0; margin-right: 3px; }
.h-thumb { width: 213px; height: 11px; border-radius: 5px; background: repeating-linear-gradient(90deg, transparent 0 3px, rgba(255,255,255,.16) 3px 5px), linear-gradient(#4a5ad0, #b4c2f6 50%, #5a6ad8); }
.harr { font-size: 8px; width: 34px; white-space: nowrap; color: #555; flex: none; }

/* dock */
.dock { width: 34px; flex: none; display: flex; flex-direction: column; }
.dark { background: linear-gradient(#5a5a5a, #3a3a3a); }
.docksec { background: #ebebe9; border-bottom: 1px solid #bdbdbd; padding-top: 9px; display: flex; flex-direction: column; align-items: center; justify-content: center; gap: 13px; flex: none; }
.docksec svg { width: 17px; height: 16px; }
.s-a { height: 40px; }
.s-b { height: 70px; }
.s-c { height: 42px; }
.s-d { height: 40px; }
.s-e { height: 42px; }
.fx { font-family: "Liberation Serif", serif; font-style: italic; font-size: 16px; color: #333; }

/* panels */
.panels { width: 197px; flex: none; display: flex; flex-direction: column; }
.panel { background: #edeeea; flex: none; border-bottom: 3px solid #2d2d2d; }
.ptabs { height: 16px; flex: none; display: flex; align-items: stretch; background: linear-gradient(#a8a8a8, #8f8f8f); font-size: 8.300px; font-weight: 600; }
.ptab { display: flex; align-items: center; padding: 0 6px 0 4px; white-space: nowrap; }
.ptab.on { background: #edeeea; color: #555; }
.ptab.off { color: #666; }
.pmenu { margin-left: auto; padding-right: 2px; }
.tabdiv { width: 1px; background: #777; }
.p-layers { height: 181px; display: flex; flex-direction: column; }
.p-layers .ptab.off { width: 40px; padding-left: 6px; }
.p-layers .ptab.on { width: 52px; padding-left: 4px; }
.layers { flex: 1; padding: 2px 14px 0 3px; background: linear-gradient(#dcdcd8, #dcdcd8) right 10px top 0 / 3px 100% no-repeat; }
.layer { height: 18px; display: flex; align-items: center; font-size: 8.800px; color: #555; border-bottom: 1px solid #e2e3df; }
.eye { width: 12px; height: 10px; margin-left: 3px; }
.lock { width: 9px; height: 10px; margin-left: 6px; background: #666; border-radius: 3px 3px 0 0; flex: none; }
.nolock { width: 10px; height: 12px; margin-left: 5px; border-left: 1px solid #bbb; border-top: 1px solid #bbb; flex: none; }
.lcolor { width: 4px; height: 16px; margin-left: 4px; flex: none; border-right: 1px solid #444; }
.nolock + .lcolor { margin-left: 4px; }
.lred { background: #c03040; }
.lblue { background: #80a8e0; }
.tri { width: 0; height: 0; margin-left: 4px; border: 3.500px solid transparent; border-left: 5px solid #999; border-right: 0; flex: none; }
.lname { margin-left: 4px; flex: 1; }
.lsq { width: 7px; height: 7px; margin-right: 5px; background: #f2f2f2; border: 1px solid #ddd; flex: none; }
.lsq.bl { background: #2050b0; border-color: #7aa0e0; }
.pen { width: 8px; height: 12px; margin-right: 5px; }
.pfoot { height: 18px; flex: none; display: flex; align-items: center; justify-content: flex-end; gap: 17px; border-top: 1px solid #c9c9c9; padding-right: 23px; margin-left: 3px; font-size: 8.300px; color: #666; }
.pfoot svg { width: 11px; height: 11px; }
.pagesinfo { margin-right: auto; padding-left: 2px; }
.p-color { height: 20px; }
.p-color .ptab.on { width: 46px; }
.p-swatches { height: 343px; display: flex; flex-direction: column; }
.p-swatches .ptab.on { width: 67px; }
.tintbar { height: 26px; flex: none; display: flex; align-items: center; margin-left: 5px; border-bottom: 1px solid #d4d4d0; font-size: 8.300px; color: #555; }
.fs2 { width: 20px; height: 18px; }
.fmtbox { width: 14px; height: 12px; margin-left: 10px; background: linear-gradient(135deg, #ddd, #666); border: 1px solid #888; }
.ttxt { font-family: "Liberation Serif", serif; font-size: 10px; margin-left: 4px; color: #888; width: 17px; }
.tintlabel { width: 38px; white-space: nowrap; }
.tintval { width: 22px; height: 14px; background: #fff; border: 1px solid #ddd; line-height: 12px; padding-left: 1px; }
.tintarrow { width: 14px; height: 14px; background: #f4f4f4; border: 1px solid #ccc; padding: 3px 4px; }
.tintarrow b { width: 0; height: 0; border: 3px solid transparent; border-left: 4px solid #333; border-right: 0; }
.pct { margin-left: 7px; }
.swlist { flex: 1; min-height: 0; padding-right: 15px; display: flex; flex-direction: column; font-size: 8.400px; color: #585858; background: linear-gradient(#dcdcd8, #dcdcd8) right 10px top 0 / 3px 100% no-repeat; }
.sw { height: 18.700px; flex: none; display: flex; align-items: center; gap: 3px; padding: 0 5px 0 3px; border-bottom: 1px solid #e4e5e1; }
.swname { flex: 1; margin-left: 5px; white-space: nowrap; letter-spacing: .65px; }
.swname.tight { letter-spacing: .1px; }
.chip { width: 12px; height: 12px; flex: none; border: 1px solid #555; display: block; }
.chip svg { width: 10px; height: 10px; }
.chip.small { width: 12px; height: 12px; }
.none { background: #fff; }
.k { background: #050505; }
.w { background: #fff; }
.cy { background: #37b6e8; }
.ma { background: #c80a88; }
.ye { background: #f2f20a; }
.re { background: #b00c10; }
.gr { background: #5cd040; }
.in { background: #38189a; }
.or { background: #de8c00; }
.da { background: #640000; }
.mi { width: 12px; height: 11px; flex: none; }
.blank { visibility: hidden; }
.gray { background: linear-gradient(135deg, #d4d4d4, #8e8e8e); border: 1px solid #aaa; }
.spot-row .swname { color: #555; letter-spacing: .3px; }
.selected { background: #bcd4f2; border-bottom: 1px solid #3a4a60; }
.selected .swname { color: #1c2c55; font-weight: 600; letter-spacing: .4px; }
.swfoot { gap: 17px; }
.showbtn { width: 28px; height: 12px; margin-right: -8px; background: linear-gradient(#888, #ccc); display: flex; justify-content: center; }
.showbtn svg { width: 12px; height: 10px; }
.fb { width: 11px; height: 11px; }
.solid { background: linear-gradient(#aaa, #777); }
.grad { background: linear-gradient(90deg, #fff, #222); border: 1px solid #666; }
.p-grad { height: 64px; border-bottom: 0; display: flex; flex-direction: column; }
.p-grad .ptab.on { width: 53px; }
.p-grad .ptab.off { width: 43px; padding-left: 6px; }
.gradbody { flex: 1; padding: 13px 14px 0 10px; }
.gradbar { height: 12px; border: 1px solid #444; background: linear-gradient(90deg, #fff, #111); }
.footer { height: 4px; flex: none; background: #a0a09c; }
```
